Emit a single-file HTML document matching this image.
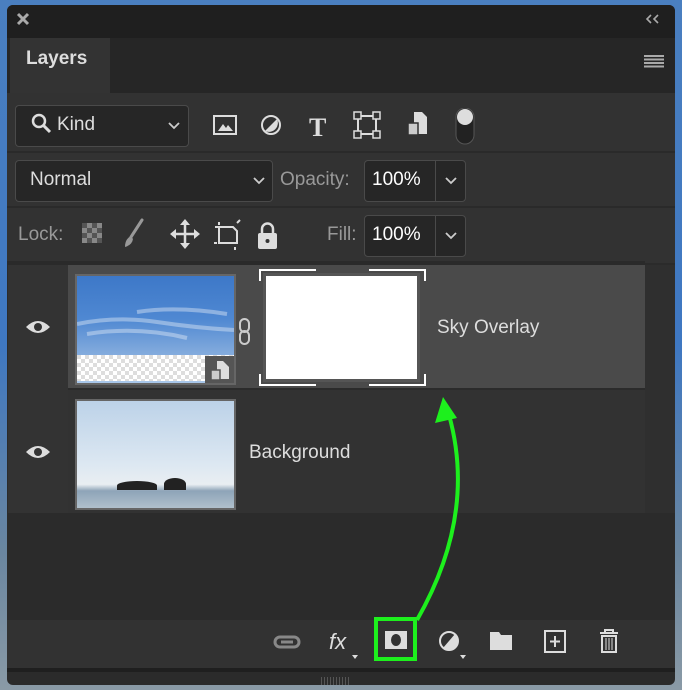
<!DOCTYPE html>
<html><head><style>
body{margin:0;width:682px;height:690px;overflow:hidden;background:linear-gradient(#4a7fc0 0,#3f78c2 50%,#6a86a0 80%,#8a9aa6 100%);font-family:"Liberation Sans",sans-serif;position:relative}
.a{position:absolute}
.panel{left:7px;top:5px;width:668px;height:680px;background:#2b2b2b;border-radius:6px;overflow:hidden}
.t{color:#ddd;font-size:19px}
.box{border:1px solid #4a4a4a;background:#262626;border-radius:4px}
</style></head><body>
<div class="a panel">
 <div class="a" style="left:0;top:0;width:668px;height:33px;background:#1f1f1f"></div>
 <svg class="a" style="left:9px;top:7px" width="14" height="14"><path d="M2 2L12 12M12 2L2 12" stroke="#aaa" stroke-width="3"/></svg>
 <svg class="a" style="left:638px;top:8px" width="16" height="12"><path d="M6 2L2 6L6 10M13 2L9 6L13 10" fill="none" stroke="#aaa" stroke-width="1.6"/></svg>
 <div class="a" style="left:0;top:33px;width:668px;height:55px;background:#262626"></div>
 <div class="a" style="left:3px;top:33px;width:100px;height:55px;background:#333"></div>
 <div class="a t" style="left:19px;top:34px;font-weight:bold;font-size:19px;line-height:40px">Layers</div>
 <div class="a" style="left:637px;top:50px;width:20px;height:14px;background:repeating-linear-gradient(#aaa 0 2px,transparent 2px 3.5px)"></div>
 <div class="a" style="left:0;top:88px;width:668px;height:170px;background:#323232"></div>
 <div class="a" style="left:0;top:146px;width:668px;height:2px;background:#2a2a2a"></div>
 <div class="a" style="left:0;top:201px;width:668px;height:2px;background:#2a2a2a"></div>
 <div class="a box" style="left:8px;top:100px;width:172px;height:40px"></div>
 <svg class="a" style="left:24px;top:108px" width="22" height="22"><circle cx="8" cy="8" r="6" fill="none" stroke="#ddd" stroke-width="2.5"/><path d="M12 12L19 19" stroke="#ddd" stroke-width="3"/></svg>
 <div class="a t" style="left:50px;top:109px">Kind</div>
 <svg class="a" style="left:160px;top:116px" width="14" height="10"><path d="M2 2L7 7L12 2" fill="none" stroke="#ccc" stroke-width="1.8"/></svg>
 <svg class="a" style="left:200px;top:103px" width="270" height="40">
  <rect x="7" y="8" width="22" height="18" fill="none" stroke="#ddd" stroke-width="2"/><path d="M11 23l5-7 3 4 2-3 5 6z" fill="#ddd"/>
  <circle cx="64" cy="17" r="9" fill="none" stroke="#ddd" stroke-width="2"/><path d="M70 11A9 9 0 0 1 58 23z" fill="#ddd"/>
  <text x="102" y="28" fill="#ddd" font-size="26" font-family="Liberation Serif" font-weight="bold">T</text>
  <rect x="151" y="8" width="18" height="18" fill="none" stroke="#ddd" stroke-width="2"/>
  <rect x="147" y="4" width="7" height="7" fill="#323232" stroke="#ddd" stroke-width="1.5"/><rect x="166" y="4" width="7" height="7" fill="#323232" stroke="#ddd" stroke-width="1.5"/><rect x="147" y="23" width="7" height="7" fill="#323232" stroke="#ddd" stroke-width="1.5"/><rect x="166" y="23" width="7" height="7" fill="#323232" stroke="#ddd" stroke-width="1.5"/>
  <path d="M207 4h8l5 5v17h-13z" fill="#ddd"/><rect x="201" y="15" width="10" height="12" fill="#ccc" stroke="#323232" stroke-width="1.5"/>
  <rect x="249" y="0" width="18" height="36" rx="9" fill="#222" stroke="#555"/><circle cx="258" cy="9" r="8" fill="#ddd"/>
 </svg>
 <div class="a box" style="left:8px;top:155px;width:256px;height:40px"></div>
 <div class="a t" style="left:23px;top:164px">Normal</div>
 <svg class="a" style="left:245px;top:171px" width="14" height="10"><path d="M2 2L7 7L12 2" fill="none" stroke="#ccc" stroke-width="1.8"/></svg>
 <div class="a t" style="left:273px;top:164px;color:#999">Opacity:</div>
 <div class="a box" style="left:357px;top:155px;width:100px;height:40px"></div>
 <div class="a" style="left:428px;top:156px;width:1px;height:40px;background:#4a4a4a"></div>
 <div class="a t" style="left:365px;top:164px;color:#fff">100%</div>
 <svg class="a" style="left:437px;top:171px" width="14" height="10"><path d="M2 2L7 7L12 2" fill="none" stroke="#ccc" stroke-width="1.8"/></svg>
 <div class="a t" style="left:11px;top:219px;color:#999">Lock:</div>
 <div class="a" style="left:75px;top:218px;width:20px;height:20px;background:conic-gradient(#888 25%,#555 0 50%,#888 0 75%,#555 0) 0 0/10px 10px"></div>
 <svg class="a" style="left:115px;top:212px" width="160" height="34">
  <path d="M20 3L9 20" stroke="#999" stroke-width="3" stroke-linecap="round"/><path d="M9 19Q3 22 3 30Q10 28 11 22z" fill="#999"/>
  <path d="M63 4v26M50 17h26" stroke="#ddd" stroke-width="2.5"/><path d="M63 2l-5 6h10zM63 32l-5-6h10zM48 17l6-5v10zM78 17l-6-5v10z" fill="#ddd"/>
  <path d="M97 10h14l4 4v12h-18z" fill="none" stroke="#ddd" stroke-width="2"/><path d="M93 10h3M113 30v3M97 5v3M115 6l3-3M92 26h3" stroke="#ddd" stroke-width="2"/>
  <rect x="136" y="16" width="19" height="16" rx="2" fill="#ddd"/><path d="M140 17v-5a5.5 5.5 0 0 1 11 0v5" fill="none" stroke="#ddd" stroke-width="2.5"/><circle cx="145.5" cy="24" r="2" fill="#323232"/>
 </svg>
 <div class="a t" style="left:320px;top:219px;color:#999">Fill:</div>
 <div class="a box" style="left:357px;top:210px;width:100px;height:40px"></div>
 <div class="a" style="left:428px;top:211px;width:1px;height:40px;background:#4a4a4a"></div>
 <div class="a t" style="left:365px;top:219px;color:#fff">100%</div>
 <svg class="a" style="left:437px;top:226px" width="14" height="10"><path d="M2 2L7 7L12 2" fill="none" stroke="#ccc" stroke-width="1.8"/></svg>
 <!-- layers -->
 <div class="a" style="left:0;top:256px;width:638px;height:4px;background:#2a2a2a"></div>
 <div class="a" style="left:1px;top:260px;width:60px;height:248px;background:#333"></div>
 <div class="a" style="left:61px;top:260px;width:577px;height:123px;background:#4a4a4a"></div>
 <div class="a" style="left:61px;top:385px;width:577px;height:123px;background:#323232"></div>
 <div class="a" style="left:638px;top:260px;width:30px;height:248px;background:#2f2f2f"></div>
 <svg class="a" style="left:18px;top:312px" width="26" height="160"><g fill="#ddd"><path d="M1 10Q13-2 25 10Q13 22 1 10z"/><path d="M1 135Q13 123 25 135Q13 147 1 135z"/></g><circle cx="13" cy="10" r="4" fill="#333"/><circle cx="13" cy="135" r="4" fill="#333"/></svg>
 <div class="a" style="left:68px;top:269px;width:157px;height:107px;border:2px solid #666;background:linear-gradient(#3d78c8,#4f88d2 40%,#7fa8dc 70%,#a9c6e8)"></div>
 <svg class="a" style="left:70px;top:271px" width="157" height="80"><g fill="none" stroke="#dde8f6" stroke-width="4" opacity=".45"><path d="M0 48Q40 40 80 46T157 54"/><path d="M10 58Q60 50 110 62"/><path d="M60 36Q100 30 150 38"/></g></svg>
 <div class="a" style="left:70px;top:350px;width:157px;height:26px;background:conic-gradient(#fff 25%,#ddd 0 50%,#fff 0 75%,#ddd 0) 0 0/8px 8px"></div>
 <div class="a" style="left:198px;top:351px;width:29px;height:27px;background:#555"></div>
 <svg class="a" style="left:202px;top:354px" width="22" height="22"><path d="M8 2h6l6 6v12h-12z" fill="#ddd"/><rect x="2" y="11" width="9" height="10" fill="#ccc" stroke="#555" stroke-width="1.5"/></svg>
 <svg class="a" style="left:231px;top:312px" width="14" height="30"><rect x="2" y="2" width="9" height="13" rx="4.5" fill="none" stroke="#ccc" stroke-width="2"/><rect x="2" y="14" width="9" height="13" rx="4.5" fill="none" stroke="#ccc" stroke-width="2"/></svg>
 <div class="a" style="left:256px;top:268px;width:157px;height:109px;background:#fff;border:3px solid #555;box-sizing:border-box"></div>
 <svg class="a" style="left:252px;top:264px" width="167" height="117"><path d="M1 12V1h56M110 1h56v11M1 105v11h56M110 116h56v-11" fill="none" stroke="#fff" stroke-width="2"/></svg>
 <div class="a t" style="left:430px;top:312px">Sky Overlay</div>
 <div class="a" style="left:68px;top:394px;width:157px;height:107px;border:2px solid #666;background:linear-gradient(#bcd2e8,#dde8f2 60%,#e9eef2 78%,#8ea4b8 84%,#b0c0cc)"></div>
 <div class="a" style="left:110px;top:476px;width:40px;height:9px;background:#222;border-radius:50% 50% 0 0"></div>
 <div class="a" style="left:157px;top:473px;width:22px;height:12px;background:#222;border-radius:50% 50% 0 0"></div>
 <div class="a t" style="left:242px;top:437px">Background</div>
 <!-- bottom bar -->
 <div class="a" style="left:0;top:615px;width:668px;height:48px;background:#323232"></div>
 <div class="a" style="left:0;top:663px;width:668px;height:4px;background:#1f1f1f"></div>
 <div class="a" style="left:314px;top:672px;width:30px;height:8px;background:repeating-linear-gradient(90deg,#555 0 1px,transparent 1px 3px)"></div>
 <svg class="a" style="left:0;top:0" width="668" height="680">
  <path d="M410 615Q470 510 442 410" fill="none" stroke="#1df01d" stroke-width="4"/>
  <path d="M428 418L436 392L450 413z" fill="#1df01d"/>
  <rect x="369" y="614" width="39" height="40" fill="none" stroke="#1df01d" stroke-width="4"/>
  <rect x="378" y="626" width="22" height="18" fill="#ddd"/><ellipse cx="389" cy="635" rx="5" ry="6" fill="#323232"/>
  <rect x="268" y="632" width="24" height="10" rx="5" fill="none" stroke="#888" stroke-width="3"/><line x1="274" y1="637" x2="286" y2="637" stroke="#888" stroke-width="3"/>
  <text x="322" y="644" fill="#ddd" font-size="22" font-style="italic">fx</text><path d="M345 650h6l-3 4z" fill="#ddd"/>
  <circle cx="442" cy="636" r="9" fill="none" stroke="#ddd" stroke-width="2"/><path d="M448 629A9 9 0 0 1 436 643z" fill="#ddd"/><path d="M453 650h6l-3 4z" fill="#ddd"/>
  <path d="M483 627h9l2 3h11v15h-22z" fill="#ddd"/>
  <rect x="538" y="626" width="20" height="21" fill="none" stroke="#ddd" stroke-width="2"/><path d="M548 631v11M543 636.5h10" stroke="#ddd" stroke-width="2"/>
  <path d="M593 628h18M598 628v-3h8v3M595 631h14v16h-14z" fill="none" stroke="#ddd" stroke-width="2"/><path d="M599 633v12M602 633v12M605 633v12" stroke="#ddd"/>
 </svg>
</div>
</body></html>
